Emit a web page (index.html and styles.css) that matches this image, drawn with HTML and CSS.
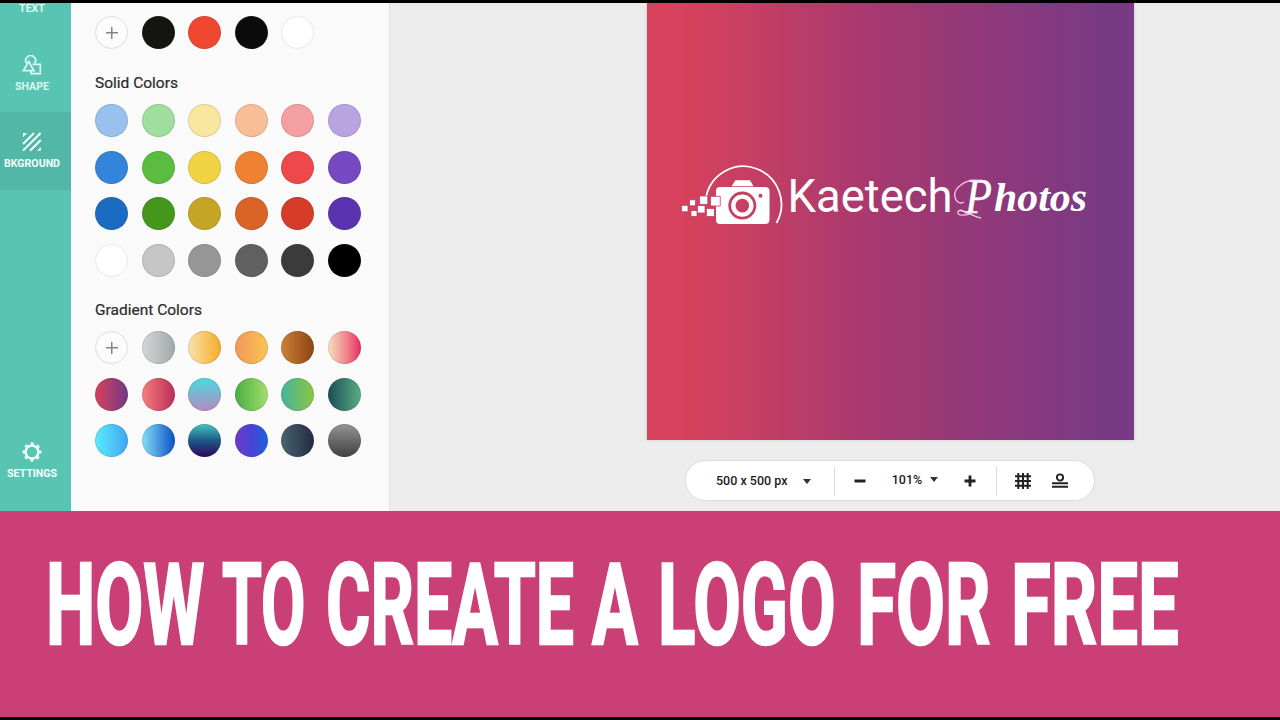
FILE: index.html
```html
<!DOCTYPE html>
<html lang="en">
<head>
<meta charset="utf-8"/>
<meta name="viewport" content="width=device-width,initial-scale=1"/>
<title>How to create a logo for free</title>
<link rel="stylesheet" href="styles.css">
</head>
<body>
<div class="app">
  <nav class="sidebar">
    <a class="tool cut">TEXT</a>
    <a class="tool">
      <svg width="20" height="20" viewBox="0 0 20 20" fill="none" stroke="currentColor" stroke-width="1.7">
        <path d="M4.6 8.2A4.9 4.9 0 1 1 12.7 8.2"/>
        <path d="M6.8 6.5L1.3 15.7H11.8Z"/>
        <path d="M10.6 9.3H18.3V18.7H9V15.7"/>
      </svg>
      SHAPE
    </a>
    <a class="tool active">
      <svg width="20" height="20" viewBox="0 0 20 20" fill="none" stroke="currentColor" stroke-width="2">
        <path d="M1 12L12 1M1 18.6L18.6 1M8 18.8L18.8 8"/>
        <path d="M1 1H5.2L1 5.2ZM18.8 18.8H15L18.8 15Z" fill="currentColor" stroke="none"/>
      </svg>
      BKGROUND
    </a>
    <a class="tool settings">
      <svg width="20" height="20" viewBox="0 0 20 20" fill="none" stroke="currentColor">
        <circle cx="10" cy="10" r="6.4" stroke-width="2.4"/>
        <circle cx="10" cy="10" r="8.1" stroke-width="2.6" stroke-dasharray="3.18 3.18" stroke-dashoffset="1.59"/>
      </svg>
      SETTINGS
    </a>
  </nav>

  <aside class="panel">
    <div class="swatches">
      <i class="sw add"></i><i class="sw" style="background:#141513"></i><i class="sw" style="background:#f04830"></i><i class="sw" style="background:#0b0b0b"></i><i class="sw white"></i>
    </div>
    <h2>Solid Colors</h2>
    <div class="swatches">
      <i class="sw" style="background:#98c1ed"></i><i class="sw" style="background:#9fde9e"></i><i class="sw" style="background:#f9e79f"></i><i class="sw" style="background:#f8bf96"></i><i class="sw" style="background:#f4a0a2"></i><i class="sw" style="background:#b9a3e1"></i>
      <i class="sw" style="background:#3385da"></i><i class="sw" style="background:#5abd40"></i><i class="sw" style="background:#f1d344"></i><i class="sw" style="background:#ee8132"></i><i class="sw" style="background:#ee484a"></i><i class="sw" style="background:#7649c2"></i>
      <i class="sw" style="background:#1a6bc1"></i><i class="sw" style="background:#44971b"></i><i class="sw" style="background:#c6a525"></i><i class="sw" style="background:#da6328"></i><i class="sw" style="background:#d53d2a"></i><i class="sw" style="background:#5a34b0"></i>
      <i class="sw white"></i><i class="sw" style="background:#c6c6c6"></i><i class="sw" style="background:#969696"></i><i class="sw" style="background:#606060"></i><i class="sw" style="background:#3b3b3b"></i><i class="sw" style="background:#000"></i>
    </div>
    <h2 class="grad-title">Gradient Colors</h2>
    <div class="swatches">
      <i class="sw add"></i>
      <i class="sw" style="background:linear-gradient(90deg,#d5d7d6,#a2a8aa)"></i>
      <i class="sw" style="background:linear-gradient(90deg,#f8e3b0,#f7ab27)"></i>
      <i class="sw" style="background:linear-gradient(90deg,#f3965a,#f7c653)"></i>
      <i class="sw" style="background:linear-gradient(90deg,#cd8139,#8d4413)"></i>
      <i class="sw" style="background:linear-gradient(90deg,#f6e3bd,#ee7482 65%,#e92a61)"></i>
      <i class="sw" style="background:linear-gradient(90deg,#d8405b,#703a87)"></i>
      <i class="sw" style="background:linear-gradient(90deg,#f57f78,#bb2c5b)"></i>
      <i class="sw" style="background:linear-gradient(180deg,#4adade,#b58ac0)"></i>
      <i class="sw" style="background:linear-gradient(90deg,#48ae45,#a3df6c)"></i>
      <i class="sw" style="background:linear-gradient(90deg,#44b39d,#8bc642)"></i>
      <i class="sw" style="background:linear-gradient(90deg,#194e59,#5bad80)"></i>
      <i class="sw" style="background:linear-gradient(90deg,#5cebfc,#41a5f5)"></i>
      <i class="sw" style="background:linear-gradient(90deg,#85e0f5,#0b4fc9)"></i>
      <i class="sw" style="background:linear-gradient(180deg,#43c4bd,#1d5a88 50%,#2c0558)"></i>
      <i class="sw" style="background:linear-gradient(90deg,#6d3bc8,#4a42d4 50%,#1963e3)"></i>
      <i class="sw" style="background:linear-gradient(90deg,#4a6370,#222a45)"></i>
      <i class="sw" style="background:linear-gradient(180deg,#949494,#404040)"></i>
    </div>
  </aside>

  <main class="workspace">
    <div class="canvas">
      <svg class="logo" width="420" height="80" viewBox="675 155 420 80">
        <!-- shutter arc -->
        <path d="M706.1 197A38 38 0 1 1 776.5 223" fill="none" stroke="#fff" stroke-width="1.8"/>
        <!-- camera -->
        <path fill="#fff" fill-rule="evenodd" d="M720 187H765Q769.5 187 769.5 191V219.5Q769.5 224 765 224H720Q716 224 716 219.5V191Q716 187 720 187ZM742.3 191.6A14 14 0 1 0 742.3 219.6A14 14 0 1 0 742.3 191.6ZM760.5 193.8A2 2 0 1 0 760.5 197.8A2 2 0 1 0 760.5 193.8Z"/>
        <path fill="#fff" d="M735.5 180.3H750L753.5 186.2H731.5Z"/>
        <circle cx="742.3" cy="205.6" r="9" fill="none" stroke="#fff" stroke-width="4.4"/>
        <!-- pixels -->
        <g fill="#fff" stroke="#c23c64" stroke-width=".8">
          <rect x="681.5" y="205.3" width="6.5" height="6.5"/>
          <rect x="689.5" y="199.8" width="6" height="6"/>
          <rect x="691" y="210.5" width="6" height="6"/>
          <rect x="699.5" y="196" width="8.3" height="8.3"/>
          <rect x="697.5" y="205.5" width="7.5" height="7.5"/>
          <rect x="706.3" y="208.5" width="8" height="8"/>
          <rect x="710.5" y="196.3" width="9.7" height="9.7"/>
        </g>
        <text class="brand" x="787.5" y="212" textLength="165" lengthAdjust="spacingAndGlyphs">Kaetech</text>
        <text class="script initial" x="965" y="213" textLength="27" lengthAdjust="spacingAndGlyphs">P</text>
        <text class="script" x="994" y="210.5" textLength="93" lengthAdjust="spacingAndGlyphs">hotos</text>
        <!-- flourish -->
        <path d="M980 181C966 178 953 188 955 197C956 203 961 204 964 202M974 211C967 217 956 216 958 211.5C961 207 970 216 981 218" fill="none" stroke="#f6ccec" stroke-width="1.3"/>
      </svg>
    </div>

    <div class="zoombar">
      <div class="size">500 x 500 px <b class="caret"></b></div>
      <div class="zoom">
        <svg width="12" height="12" viewBox="0 0 12 12"><path d="M.5 4.5H11.5V7.5H.5Z"/></svg>
        <span>101% <b class="caret"></b></span>
        <svg width="12" height="12" viewBox="0 0 12 12"><path d="M4.6.5H7.4V4.6H11.5V7.4H7.4V11.5H4.6V7.4H.5V4.6H4.6Z"/></svg>
      </div>
      <div class="view">
        <svg width="16" height="16" viewBox="0 0 16 16" fill="none" stroke="#222" stroke-width="2"><path d="M3.3 0V16M8 0V16M12.7 0V16M0 3.3H16M0 8H16M0 12.7H16"/></svg>
        <svg width="16" height="16" viewBox="0 0 16 16" fill="none" stroke="#222" stroke-width="1.9"><circle cx="8" cy="4.5" r="3.1"/><path d="M0 10.2H16M0 13.8H16"/></svg>
      </div>
    </div>
  </main>
</div>

<div class="banner">
  <h1>
    <span class="w1">HOW</span>
    <span class="w2">TO</span>
    <span class="w3">CREATE</span>
    <span class="w4">A</span>
    <span class="w5">LOGO</span>
    <span class="w6">FOR</span>
    <span class="w7">FREE</span>
  </h1>
</div>
</body>
</html>
```
FILE: styles.css
```css
*{box-sizing:border-box}
body{margin:0;width:1280px;height:720px;overflow:hidden;background:#000;padding:3px 0;font-family:Roboto,Arial,sans-serif}
svg{display:block}
.app{display:flex;height:508px;background:#ececec;overflow:hidden}

.sidebar{width:71px;display:flex;flex-direction:column;background:#58c5b3}
.tool{height:77.5px;padding:20px 7px 0 0;display:flex;flex-direction:column;align-items:center;gap:5px;font-size:10.6px;line-height:13px;font-weight:700;color:#def7f1}
.tool.cut{height:31.5px;padding-top:0;line-height:12px}
.tool.active{background:#52b7a6;color:#f1fffc}
.tool.settings{margin-top:auto;height:79px;color:#f1fffc;padding-top:10px}

.panel{width:319px;padding:13px 0 0 24px;background:#fafafa;border-right:1px solid #e2e2e2}
.swatches{display:grid;grid-template-columns:repeat(6,33px);gap:13.6px}
.sw{width:33px;height:33px;border-radius:50%;border:1px solid rgba(60,60,60,.15);background-origin:border-box!important}
.sw.white{background:#fff;border-color:#e8e8e8}
.sw.add{border-color:#ddd;background:linear-gradient(#858585,#858585) center/12px 1.5px no-repeat,linear-gradient(#858585,#858585) center/1.5px 12px no-repeat,#fcfcfc}
h2{margin:24px 0 11px;font-size:15.5px;line-height:20px;font-weight:400;color:#2b2b2b;-webkit-text-stroke:.2px #2b2b2b}
h2.grad-title{margin-top:23px;margin-bottom:11.5px}

.workspace{flex:1;padding-left:257px}
.canvas{width:487px;height:437px;padding:152px 0 0 28px;background:linear-gradient(90deg,#d8425c 6%,#a33871 50%,#783a85 94%);box-shadow:0 0 3px rgba(0,0,0,.15)}
.brand{font-size:46px;font-weight:400;fill:#fff}
.script{font-family:"Liberation Serif",serif;font-size:41px;font-weight:700;font-style:italic;fill:#fff}
.script.initial{font-size:50px;font-weight:400;stroke:#fff;stroke-width:.4px}

.zoombar{width:410px;height:41px;margin:20px 0 0 38px;display:flex;align-items:center;background:#fff;border:1px solid #dcdcdc;border-radius:21px;font-size:12.5px;font-weight:500;color:#222}
.size{width:149px;height:30px;padding-left:30px;display:flex;align-items:center;gap:16px;border-right:1px solid #ddd}
.size .caret{margin-top:2px}
.zoom{width:162px;height:30px;padding:0 20px 0 19px;display:flex;align-items:center;justify-content:space-between;border-right:1px solid #ddd}
.zoom span{display:flex;align-items:center;gap:8px;margin-top:-3px}
.zoom svg{fill:#222}
.view{display:flex;gap:21px;padding-left:18px}
.caret{width:0;height:0;border:4px solid transparent;border-top:5px solid #333;border-bottom:0}

.banner{height:206px;background:#ca3f75;overflow:hidden}
/* condensed caps: every word sits in its own column and is squeezed to it */
h1{margin:0;padding:49px 0 0 46px;display:grid;grid-template-columns:176px 104px 266px 66px 199px 154px 180px;font-size:114px;line-height:90px;font-weight:700;color:#fff;-webkit-text-stroke:2.4px #fff}
h1 span{display:block;width:max-content;transform-origin:0 50%}
.w1{transform:scaleX(.612)}
.w2{transform:scaleX(.565)}
.w3{transform:scaleX(.596)}
.w4{transform:scaleX(.6)}
.w5{transform:scaleX(.606)}
.w6{transform:scaleX(.624)}
.w7{transform:scaleX(.636)}
```
